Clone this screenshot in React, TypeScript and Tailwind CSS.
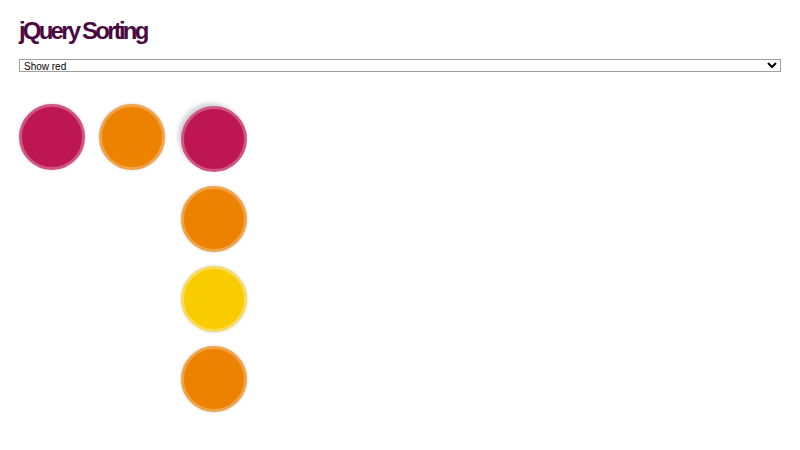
import React from "react";

type Ball = { color: "red" | "orange" | "yellow"; lifted?: boolean };

const columns: Ball[][] = [
  [{ color: "red" }],
  [{ color: "orange" }],
  [{ color: "red", lifted: true }, { color: "orange" }, { color: "yellow" }, { color: "orange" }],
];

const colorClass: Record<Ball["color"], string> = {
  red: "bg-[#bd1651] border-[#cf5583]",
  orange: "bg-[#ec8200] border-[#f1a349]",
  yellow: "bg-[#f9cc00] border-[#fbdb5a]",
};

function Circle({ ball }: { ball: Ball }) {
  return (
    <div
      className={`w-[66px] h-[66px] rounded-full border-[3px] ${colorClass[ball.color]} ${
        ball.lifted
          ? "mt-[2px] shadow-[-3px_-3px_4px_rgba(0,0,0,0.18)]"
          : "shadow-[0_0_3px_rgba(0,0,0,0.2)]"
      }`}
    />
  );
}

export default function App() {
  return (
    <div className="min-h-[450px] bg-white px-[19px] pt-[17px] font-['Liberation_Sans',Arial,sans-serif]">
      <h1 className="text-[24px] leading-[28px] font-bold tracking-[-2.8px] text-[#4b0a40]">
        jQuery Sorting
      </h1>
      <select className="mt-[14px] w-[762px] h-[13px] text-[10px] leading-[10px] border border-[#a0a0a0] bg-white text-black">
        <option>Show red</option>
        <option>Show orange</option>
        <option>Show yellow</option>
      </select>
      <div className="mt-[27px] flex gap-[14px]">
        {columns.map((col, i) => (
          <div
            key={i}
            className={`flex flex-col gap-[14px] w-[66px] ${i === 2 ? "ml-[2px]" : ""}`}
          >
            {col.map((ball, j) => (
              <Circle key={j} ball={ball} />
            ))}
          </div>
        ))}
      </div>
    </div>
  );
}
